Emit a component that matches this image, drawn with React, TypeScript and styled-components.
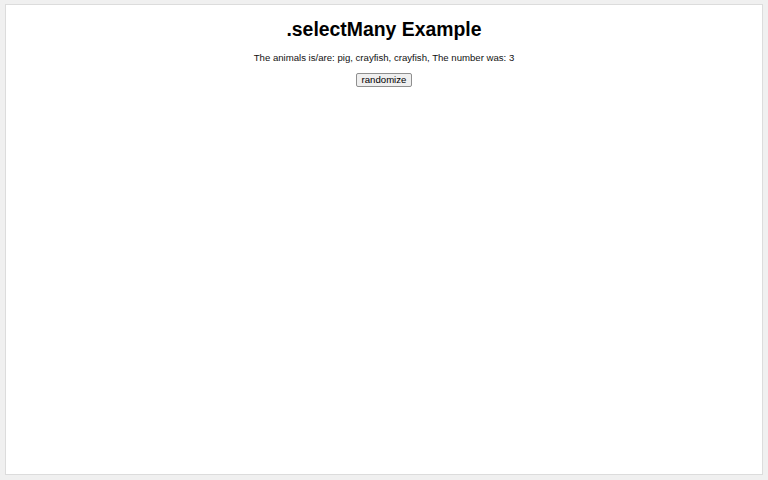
import React, { useState } from "react";
import styled, { createGlobalStyle } from "styled-components";

const Global = createGlobalStyle`
  html, body {
    margin: 0;
    padding: 0;
    background: #f0f0f0;
    font-family: "Liberation Sans", Arial, sans-serif;
  }
`;

const Page = styled.div`
  padding: 4px 5px 5px 5px;
  height: 480px;
  box-sizing: border-box;
  display: flex;
`;

const Panel = styled.main`
  flex: 1;
  background: #ffffff;
  border: 1px solid #dcdcdc;
  display: flex;
  flex-direction: column;
  align-items: center;
  padding-top: 13px;
`;

const Title = styled.h1`
  margin: 0;
  font-size: 19.4px;
  font-weight: bold;
  color: #000;
  line-height: 22px;
`;

const Summary = styled.p`
  margin: 12px 0 0;
  font-size: 9.6px;
  line-height: 12px;
  color: #111;
`;

const Button = styled.button`
  margin-top: 9px;
  font-family: "Liberation Sans", Arial, sans-serif;
  font-size: 9.6px;
  line-height: 12px;
  padding: 0 4.5px;
  color: #000;
  background: #efefef;
  border: 1px solid #8f8f8f;
  border-radius: 2px;
`;

const animals = ["pig", "crayfish", "cow", "horse", "duck", "sheep"];

export default function App() {
  const [picked, setPicked] = useState<string[]>(["pig", "crayfish", "crayfish"]);

  const randomize = () => {
    const n = 1 + Math.floor(Math.random() * 5);
    setPicked(
      Array.from({ length: n }, () => animals[Math.floor(Math.random() * animals.length)])
    );
  };

  return (
    <>
      <Global />
      <Page>
        <Panel>
          <Title>.selectMany Example</Title>
          <Summary>
            The animals is/are: {picked.map((a) => a + ", ").join("")}The number was: {picked.length}
          </Summary>
          <Button onClick={randomize}>randomize</Button>
        </Panel>
      </Page>
    </>
  );
}
